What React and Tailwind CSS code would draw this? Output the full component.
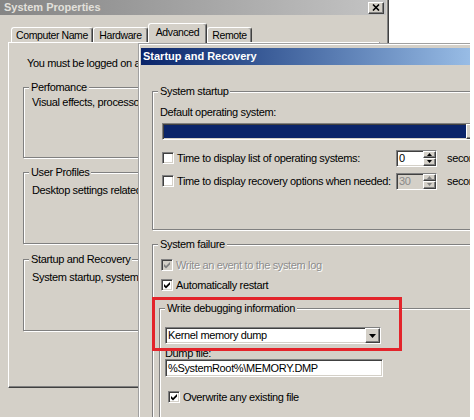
import React from "react";

const raised =
  "border border-t-white border-l-white border-r-[#404040] border-b-[#404040] shadow-[inset_-1px_-1px_0_#808080]";
const sunken =
  "border border-t-[#808080] border-l-[#808080] border-r-white border-b-white shadow-[inset_1px_1px_0_#404040,inset_-1px_-1px_0_#d4d0c8]";

function Check({ checked, disabled }) {
  return (
    <span
      className={`w-[12px] h-[12px] shrink-0 flex items-center justify-center ${sunken} ${
        disabled ? "bg-[#d4d0c8]" : "bg-white"
      }`}
    >
      {checked && (
        <svg width="7" height="7" viewBox="0 0 7 7">
          <path d="M0 2 L2 4 L6 0 L6 2.6 L2 6.6 L0 4.6 Z" fill={disabled ? "#808080" : "#000"} />
        </svg>
      )}
    </span>
  );
}

function DropBtn() {
  return (
    <span className={`w-[15px] h-full shrink-0 flex items-center justify-center bg-[#d4d0c8] ${raised}`}>
      <svg width="7" height="4" viewBox="0 0 7 4">
        <path d="M0 0H7L3.5 4Z" fill="#000" />
      </svg>
    </span>
  );
}

function Spin({ value, disabled }) {
  const col = disabled ? "#808080" : "#000";
  return (
    <div className={`w-[41px] h-[17px] shrink-0 flex ${sunken} ${disabled ? "bg-[#d4d0c8]" : "bg-white"}`}>
      <span className={`flex-1 pl-[2px] leading-[15px] ${disabled ? "text-[#8a8a8a]" : ""}`}>{value}</span>
      <span className="w-[13px] flex flex-col">
        <span className={`h-[7px] flex items-center justify-center bg-[#d4d0c8] ${raised}`}>
          <svg width="5" height="3" viewBox="0 0 5 3">
            <path d="M0 3H5L2.5 0Z" fill={col} />
          </svg>
        </span>
        <span className={`h-[8px] flex items-center justify-center bg-[#d4d0c8] ${raised}`}>
          <svg width="5" height="3" viewBox="0 0 5 3">
            <path d="M0 0H5L2.5 3Z" fill={col} />
          </svg>
        </span>
      </span>
    </div>
  );
}

function Group({ label, className = "", children }) {
  return (
    <div className={`border border-[#808080] shadow-[inset_1px_1px_0_#fff,1px_1px_0_#fff] ${className}`}>
      <div className="-mt-[7px] ml-[5px] px-[2px] w-fit bg-[#d4d0c8] leading-[13px] relative">{label}</div>
      {children}
    </div>
  );
}

function Tab({ w, active, children }) {
  return active ? (
    <div
      className={`${w} h-[20px] -mb-px relative z-10 bg-[#d4d0c8] border-t border-l border-r border-t-white border-l-white border-r-[#404040] shadow-[inset_-1px_0_0_#808080] rounded-t-[3px] flex items-center justify-center pb-[2px] text-[10.5px] tracking-[-0.4px]`}
    >
      {children}
    </div>
  ) : (
    <div
      className={`${w} h-[15px] border-t border-l border-r border-t-white border-l-white border-r-[#404040] shadow-[inset_-1px_0_0_#808080] rounded-t-[3px] flex items-center justify-center text-[10.5px] tracking-[-0.4px]`}
    >
      {children}
    </div>
  );
}

function SysProps() {
  return (
    <div className="absolute left-0 top-0 w-[389px] h-[417px] bg-[#d4d0c8] border-r border-r-[#404040] shadow-[inset_-1px_0_0_#808080]">
      <div className="h-[15px] mr-[2px] pl-[4px] pr-[2px] flex items-center justify-between bg-linear-to-r from-[#858585] to-[#c4c4c4]">
        <span className="font-bold tracking-normal text-[#e2e0db]">System Properties</span>
        <span className={`w-[16px] h-[12px] flex items-center justify-center bg-[#d4d0c8] ${raised}`}>
          <svg width="8" height="7" viewBox="0 0 8 7">
            <path d="M1 0.5L7 6.5M7 0.5L1 6.5" stroke="#000" strokeWidth="1.6" />
          </svg>
        </span>
      </div>
      <div className="pl-[8px] pt-[8px]">
        <div className="flex items-end h-[19px] pl-[3px]">
          <Tab w="w-[82px]">Computer Name</Tab>
          <Tab w="w-[55px]">Hardware</Tab>
          <Tab w="w-[59px]" active>
            Advanced
          </Tab>
          <Tab w="w-[45px]">Remote</Tab>
        </div>
        <div className="w-[372px] h-[346px] overflow-hidden border border-t-white border-l-white border-r-[#404040] border-b-[#404040] shadow-[inset_-1px_-1px_0_#808080] pl-[14px] pt-[14px] pr-[10px] whitespace-nowrap">
          <div className="pl-[4px]">You must be logged on as an Administrator to make most of these changes.</div>
          <Group label="Perfomance" className="mt-[17px] h-[71px]">
            <div className="pl-[8px] mt-[2px]">Visual effects, processor scheduling, memory usage, and virtual memory</div>
          </Group>
          <Group label="User Profiles" className="mt-[14px] h-[72px]">
            <div className="pl-[8px] mt-[5px]">Desktop settings related to your logon</div>
          </Group>
          <Group label="Startup and Recovery" className="mt-[15px] h-[72px]">
            <div className="pl-[8px] mt-[5px]">System startup, system failure, and debugging information</div>
          </Group>
        </div>
      </div>
    </div>
  );
}

function Dialog() {
  return (
    <div className="absolute left-[138px] top-[43px] w-[360px] h-[380px] bg-[#d4d0c8] border-t border-l border-t-[#a0a0a0] border-l-[#a0a0a0] shadow-[inset_1px_1px_0_#fff] pt-[4px] pl-[2px] whitespace-nowrap">
      <div className="h-[17px] pl-[2px] flex items-center bg-linear-to-r from-[#0a246a] to-[#a6caf0]">
        <span className="font-bold tracking-normal text-white">Startup and Recovery</span>
      </div>
      <div className="pl-[11px] pt-[26px] pr-[10px]">
        <Group label="System startup" className="h-[139px]">
          <div className="pl-[7px] mt-[8px]">Default operating system:</div>
          <div className={`ml-[9px] mt-[4px] w-[320px] h-[17px] flex ${sunken} bg-[#0a246a]`}>
            <span className="flex-1" />
            <DropBtn />
          </div>
          <div className="ml-[9px] mt-[9px] h-[18px] flex items-center">
            <Check />
            <span className="ml-[3px] w-[219px]">Time to display list of operating systems:</span>
            <Spin value="0" />
            <span className="ml-[10px]">seconds</span>
          </div>
          <div className="ml-[9px] mt-[5px] h-[18px] flex items-center">
            <Check />
            <span className="ml-[3px] w-[219px]">Time to display recovery options when needed:</span>
            <Spin value="30" disabled />
            <span className="ml-[10px]">seconds</span>
          </div>
        </Group>
        <Group label="System failure" className="mt-[14px] h-[220px]">
          <div className="ml-[8px] mt-[5px] h-[18px] flex items-center">
            <Check checked disabled />
            <span className="ml-[3px] text-[#8d8d8d] [text-shadow:1px_1px_0_#fff]">Write an event to the system log</span>
          </div>
          <div className="ml-[8px] mt-[2px] h-[18px] flex items-center">
            <Check checked />
            <span className="ml-[3px]">Automatically restart</span>
          </div>
          <Group label="Write debugging information" className="ml-[6px] mt-[14px] h-[160px]">
            <div className={`ml-[5px] mt-[12px] w-[216px] h-[17px] flex bg-white ${sunken}`}>
              <span className="flex-1 pl-[2px] leading-[15px]">Kernel memory dump</span>
              <DropBtn />
            </div>
            <div className="ml-[5px] mt-[3px] leading-[12px]">Dump file:</div>
            <div className={`ml-[5px] w-[218px] h-[18px] bg-white ${sunken} pl-[2px] leading-[16px]`}>
              %SystemRoot%\MEMORY.DMP
            </div>
            <div className="ml-[8px] mt-[11px] h-[18px] flex items-center">
              <Check checked />
              <span className="ml-[3px]">Overwrite any existing file</span>
            </div>
          </Group>
        </Group>
      </div>
      <div className="absolute left-[13px] top-[253px] w-[250px] h-[54px] border-[3px] border-[#e3242b]" />
    </div>
  );
}

export default function App() {
  return (
    <div className="w-[474px] h-[420px] bg-white font-['Liberation_Sans',Arial,sans-serif] text-[11px] leading-[13px] tracking-[-0.35px] text-black overflow-hidden">
      <div className="relative w-[470px] h-[417px] overflow-hidden">
        <SysProps />
        <Dialog />
      </div>
    </div>
  );
}
